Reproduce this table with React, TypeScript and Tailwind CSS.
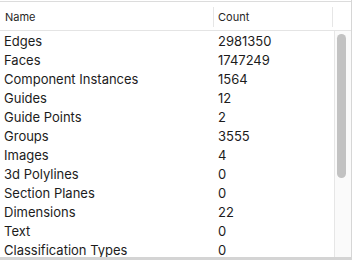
const rows: [string, string][] = [
  ['Edges', '2981350'],
  ['Faces', '1747249'],
  ['Component Instances', '1564'],
  ['Guides', '12'],
  ['Guide Points', '2'],
  ['Groups', '3555'],
  ['Images', '4'],
  ['3d Polylines', '0'],
  ['Section Planes', '0'],
  ['Dimensions', '22'],
  ['Text', '0'],
  ['Classification Types', '0'],
];

export default function App() {
  return (
    <div
      className="w-[352px] h-[260px] overflow-hidden bg-white flex flex-col border-r border-[#d6d6d6]"
      style={{fontFamily: 'Inter, "Liberation Sans", Arial, sans-serif'}}
    >
      <div className="h-[1px] mt-[1px] bg-[#dcdcdc] shrink-0" />
      <div className="h-[29px] shrink-0 flex items-center pt-[2px] border-b border-[#e4e4e4] text-[11px] text-[#262626]">
        <div className="w-[214px] pl-[5px] border-r border-[#e6e6e6] h-[20px] flex items-center">Name</div>
        <div className="w-[119px] pl-[4px] border-r border-[#e6e6e6] h-[20px] flex items-center">Count</div>
        <div className="flex-1" />
      </div>
      <div className="flex-1 flex min-h-0">
        <div className="flex-1 pt-[1px] text-[13px] text-[#1c1c1c]">
          {rows.map(([name, count]) => (
            <div key={name} className="h-[19px] flex items-center">
              <div className="w-[218px] pl-[4px]">{name}</div>
              <div>{count}</div>
            </div>
          ))}
        </div>
        <div className="w-[17px] shrink-0 bg-[#fafafa] border-l border-[#e6e6e6] pt-[3px] pl-[2px]">
          <div className="w-[9px] h-[144px] rounded-full bg-[#c2c2c2]" />
        </div>
      </div>
      <div className="h-[3px] shrink-0 bg-[#d4d4d4]" />
    </div>
  );
}
